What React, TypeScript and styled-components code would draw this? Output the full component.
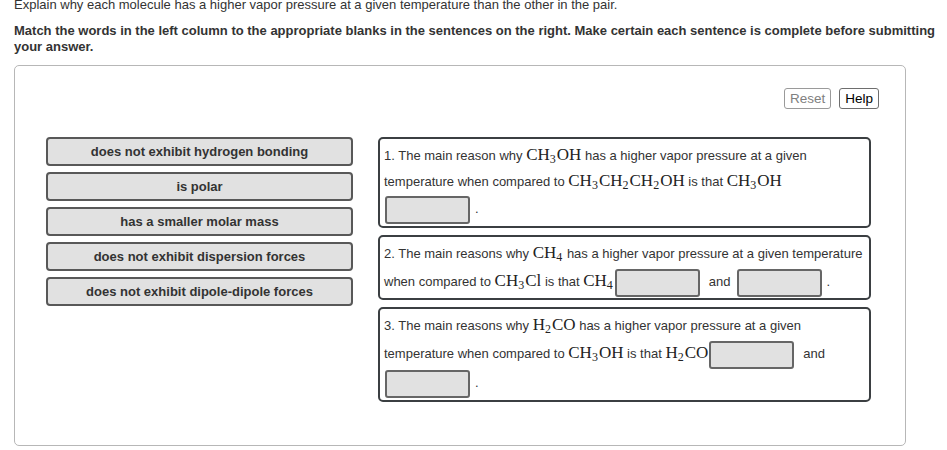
import styled, { createGlobalStyle } from 'styled-components';

const GlobalStyle = createGlobalStyle`
  body {
    margin: 0;
    background: #fff;
    font-family: 'Liberation Sans', Arial, sans-serif;
    color: #333;
  }
`;

const tiles = [
  'does not exhibit hydrogen bonding',
  'is polar',
  'has a smaller molar mass',
  'does not exhibit dispersion forces',
  'does not exhibit dipole-dipole forces',
];

const App = () => {
  return (
    <>
      <GlobalStyle />
      <Page>
        <Intro>
          Explain why each molecule has a higher vapor pressure at a given temperature than the other in the pair.
        </Intro>
        <Instructions>
          Match the words in the left column to the appropriate blanks in the sentences on the right. Make certain each sentence is complete before submitting
          <br />
          your answer.
        </Instructions>
        <Panel>
          <Toolbar>
            <ToolButton $disabled>Reset</ToolButton>
            <ToolButton>Help</ToolButton>
          </Toolbar>
          <Columns>
            <TileColumn>
              {tiles.map((t) => (
                <Tile key={t}>{t}</Tile>
              ))}
            </TileColumn>
            <SentenceColumn>
              <Sentence>
                <Line>
                  1. The main reason why{' '}
                  <Formula>
                    CH<Sub>3</Sub>OH
                  </Formula>{' '}
                  has a higher vapor pressure at a given
                </Line>
                <Line>
                  temperature when compared to{' '}
                  <Formula>
                    CH<Sub>3</Sub>CH<Sub>2</Sub>CH<Sub>2</Sub>OH
                  </Formula>{' '}
                  is that{' '}
                  <Formula>
                    CH<Sub>3</Sub>OH
                  </Formula>
                </Line>
                <Line $tall>
                  <Blank />
                  <Period>.</Period>
                </Line>
              </Sentence>
              <Sentence>
                <Line>
                  2. The main reasons why{' '}
                  <Formula>
                    CH<Sub>4</Sub>
                  </Formula>{' '}
                  has a higher vapor pressure at a given temperature
                </Line>
                <Line $tall>
                  when compared to{' '}
                  <Formula>
                    CH<Sub>3</Sub>Cl
                  </Formula>{' '}
                  is that{' '}
                  <Formula>
                    CH<Sub>4</Sub>
                  </Formula>
                  <Blank />
                  <Word>and</Word>
                  <Blank />
                  <Period>.</Period>
                </Line>
              </Sentence>
              <Sentence>
                <Line>
                  3. The main reasons why{' '}
                  <Formula>
                    H<Sub>2</Sub>CO
                  </Formula>{' '}
                  has a higher vapor pressure at a given
                </Line>
                <Line $tall>
                  temperature when compared to{' '}
                  <Formula>
                    CH<Sub>3</Sub>OH
                  </Formula>{' '}
                  is that{' '}
                  <Formula>
                    H<Sub>2</Sub>CO
                  </Formula>
                  <Blank />
                  <Word>and</Word>
                </Line>
                <Line $tall>
                  <Blank />
                  <Period>.</Period>
                </Line>
              </Sentence>
            </SentenceColumn>
          </Columns>
        </Panel>
      </Page>
    </>
  );
};

export default App;

const Page = styled.div`
  width: 947px;
  padding-bottom: 3px;
`;

const Intro = styled.div`
  margin-top: -3px;
  padding-left: 14px;
  font-size: 13px;
  line-height: 16px;
  color: #333;
  white-space: nowrap;
`;

const Instructions = styled.div`
  margin-top: 10px;
  padding-left: 14px;
  font-size: 13px;
  font-weight: 700;
  line-height: 16px;
  color: #333;
  white-space: nowrap;
`;

const Panel = styled.div`
  box-sizing: border-box;
  width: 892px;
  margin: 10px 0 0 14px;
  padding: 22px 26px 43px 31px;
  border: 1px solid #b7b7b7;
  border-radius: 5px;
`;

const Toolbar = styled.div`
  display: flex;
  justify-content: flex-end;
  gap: 8px;
`;

const ToolButton = styled.button<{ $disabled?: boolean }>`
  box-sizing: border-box;
  height: 21px;
  padding: 0 5px;
  font-family: 'Liberation Sans', Arial, sans-serif;
  font-size: 13.5px;
  color: ${(p) => (p.$disabled ? '#808080' : '#000')};
  background: #fff;
  border: 1px solid ${(p) => (p.$disabled ? '#9a9a9a' : '#6e6e6e')};
  border-radius: 3px;
  cursor: pointer;
`;

const Columns = styled.div`
  display: flex;
  align-items: flex-start;
  gap: 25px;
  margin-top: 28px;
`;

const TileColumn = styled.div`
  display: flex;
  flex-direction: column;
  gap: 6px;
  width: 307px;
`;

const Tile = styled.div`
  box-sizing: border-box;
  height: 29px;
  display: flex;
  align-items: center;
  justify-content: center;
  background: #e1e1e1;
  border: 2px solid #585858;
  border-radius: 4px;
  font-size: 13px;
  font-weight: 700;
  color: #333;
`;

const SentenceColumn = styled.div`
  display: flex;
  flex-direction: column;
  gap: 7px;
  width: 493px;
`;

const Sentence = styled.div`
  box-sizing: border-box;
  padding: 3px 4px 2px;
  border: 2px solid #3b3f42;
  border-radius: 5px;
  font-size: 13px;
  color: #333;
`;

const Line = styled.div<{ $tall?: boolean }>`
  height: ${(p) => (p.$tall ? 30 : 26)}px;
  line-height: ${(p) => (p.$tall ? 30 : 26)}px;
  white-space: nowrap;
`;

const Formula = styled.span`
  font-family: 'Liberation Serif', 'Times New Roman', serif;
  font-size: 17px;
  color: #222;
`;

const Sub = styled.sub`
  font-size: 12px;
  vertical-align: -3px;
  line-height: 0;
  margin-right: 1px;
`;

const Blank = styled.span`
  display: inline-block;
  box-sizing: border-box;
  width: 85px;
  height: 28px;
  margin-left: 1px;
  vertical-align: middle;
  background: #e1e1e1;
  border: 2px solid #666;
  border-radius: 3px;
`;

const Word = styled.span`
  margin: 0 5px 0 9px;
`;

const Period = styled.span`
  margin-left: 5px;
`;
